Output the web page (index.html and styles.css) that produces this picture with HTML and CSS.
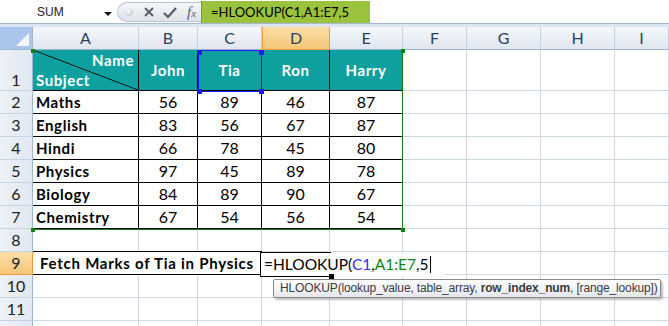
FILE: index.html
```html
<!DOCTYPE html>
<html lang="en">
<head>
	<meta charset="UTF-8">
	<title>HLOOKUP</title>
	<link rel="stylesheet" href="styles.css">
</head>
<body>
	<div class="formula-bar">
		<div class="name-box"><span>SUM</span><i class="drop"></i></div>
		<div class="fx-buttons">
			<span class="dot"></span>
			<svg width="10" height="10" viewBox="0 0 10 10"><path d="M1 1L9 9M9 1L1 9" stroke="#5a5e66" stroke-width="2"/></svg>
			<svg width="14" height="11" viewBox="0 0 14 11"><path d="M1 6L5 10L13 1" stroke="#5a5e66" stroke-width="2.2" fill="none"/></svg>
			<span class="fx">f<sub>x</sub></span>
		</div>
		<div class="formula-input"><span class="hl">=HLOOKUP(C1,A1:E7,5</span></div>
	</div>
	<div class="strip"></div>

	<div class="sheet">
		<!-- column headers -->
		<div class="corner"></div>
		<div class="ch">A</div><div class="ch">B</div><div class="ch">C</div><div class="ch sel">D</div>
		<div class="ch">E</div><div class="ch">F</div><div class="ch">G</div><div class="ch">H</div><div class="ch">I</div>

		<!-- row 1 -->
		<div class="rh tall">1</div>
		<div class="c hd diag"><span class="nm">Name</span><span class="sb">Subject</span></div>
		<div class="c hd">John</div><div class="c hd">Tia</div><div class="c hd">Ron</div><div class="c hd">Harry</div>
		<div class="c"></div><div class="c"></div><div class="c"></div><div class="c"></div>

		<div class="rh">2</div>
		<div class="c t nm-cell">Maths</div><div class="c t">56</div><div class="c t">89</div><div class="c t">46</div><div class="c t">87</div>
		<div class="c"></div><div class="c"></div><div class="c"></div><div class="c"></div>

		<div class="rh">3</div>
		<div class="c t nm-cell">English</div><div class="c t">83</div><div class="c t">56</div><div class="c t">67</div><div class="c t">87</div>
		<div class="c"></div><div class="c"></div><div class="c"></div><div class="c"></div>

		<div class="rh">4</div>
		<div class="c t nm-cell">Hindi</div><div class="c t">66</div><div class="c t">78</div><div class="c t">45</div><div class="c t">80</div>
		<div class="c"></div><div class="c"></div><div class="c"></div><div class="c"></div>

		<div class="rh">5</div>
		<div class="c t nm-cell">Physics</div><div class="c t">97</div><div class="c t">45</div><div class="c t">89</div><div class="c t">78</div>
		<div class="c"></div><div class="c"></div><div class="c"></div><div class="c"></div>

		<div class="rh">6</div>
		<div class="c t nm-cell">Biology</div><div class="c t">84</div><div class="c t">89</div><div class="c t">90</div><div class="c t">67</div>
		<div class="c"></div><div class="c"></div><div class="c"></div><div class="c"></div>

		<div class="rh">7</div>
		<div class="c t nm-cell">Chemistry</div><div class="c t">67</div><div class="c t">54</div><div class="c t">56</div><div class="c t">54</div>
		<div class="c"></div><div class="c"></div><div class="c"></div><div class="c"></div>

		<div class="rh">8</div>
		<div class="c"></div><div class="c"></div><div class="c"></div><div class="c"></div><div class="c"></div>
		<div class="c"></div><div class="c"></div><div class="c"></div><div class="c"></div>

		<div class="rh sel">9</div>
		<div class="c merged">Fetch Marks of Tia in Physics</div>
		<div class="c"></div><div class="c"></div><div class="c"></div><div class="c"></div><div class="c"></div><div class="c"></div>

		<div class="rh">10</div>
		<div class="c"></div><div class="c"></div><div class="c"></div><div class="c"></div><div class="c"></div>
		<div class="c"></div><div class="c"></div><div class="c"></div><div class="c"></div>

		<div class="rh">11</div>
		<div class="c"></div><div class="c"></div><div class="c"></div><div class="c"></div><div class="c"></div>
		<div class="c"></div><div class="c"></div><div class="c"></div><div class="c"></div>

		<!-- row 12 is only a sliver at the bottom of the window -->
		<div class="rh"></div>
		<div class="c"></div><div class="c"></div><div class="c"></div><div class="c"></div><div class="c"></div>
		<div class="c"></div><div class="c"></div><div class="c"></div><div class="c"></div>

		<!-- range references shown while editing -->
		<div class="ref ref-green">
			<i class="h tl"></i><i class="h tr"></i><i class="h bl"></i><i class="h br"></i>
		</div>
		<div class="ref ref-blue">
			<i class="h tl"></i><i class="h tr"></i><i class="h bl"></i><i class="h br"></i>
		</div>

		<div class="edit"><span class="edit-text">=HLOOKUP(<b class="r-blue">C1</b>,<b class="r-green">A1:E7</b>,5<i class="caret"></i></span><i class="fill"></i></div>

		<div class="tip">HLOOKUP(lookup_value, table_array, <b>row_index_num</b>, [range_lookup])</div>
	</div>
</body>
</html>
```

FILE: styles.css
```css
*{box-sizing: border-box;}
html,body{height: 326px;overflow: hidden;}
body{margin: 0;background: #fff;font-family: Lato, "Liberation Sans", sans-serif;color: #000;}

/* formula bar */
.formula-bar{display: flex;height: 24px;border-bottom: 1px solid #a7b9d1;background: #fff;}
.name-box{width: 117px;position: relative;font: 12px "Liberation Sans", sans-serif;color: #222;padding: 5px 0 0 37px;}
.name-box .drop{position: absolute;left: 104px;top: 12px;border: 4px solid transparent;border-top: 4px solid #111;border-bottom: 0;}
.fx-buttons{width: 84px;margin: 2px 0 1px;display: flex;align-items: center;gap: 9px;padding-left: 7px;border-radius: 11px 0 0 11px;border: 1px solid #b9c5d5;border-right: 0;background: linear-gradient(#f4f6f9, #dfe4ea);}
.fx-buttons .dot{width: 8px;height: 8px;border-radius: 50%;background: radial-gradient(circle at 40% 35%, #fff, #b5bac2);margin-right: 2px;}
.fx-buttons .fx{font: italic 15px "Liberation Serif", serif;color: #5a5e66;margin-left: 1px;}
.fx-buttons .fx sub{font-size: 11px;vertical-align: 0;}
.formula-input{flex: 1;padding-top: 1px;}
.formula-input .hl{display: inline-block;width: 169px;height: 22px;background: #9bc23c;border-left: 1px solid #7b9a30;font: 13px Lato, sans-serif;line-height: 22px;padding-left: 9px;}

.strip{height: 3px;background: #dce6f2;}

/* sheet grid */
.sheet{position: relative;display: grid;grid-template-columns: 33px 106px 59px 64px 68px 73px 64px 74px 74px 1fr;grid-template-rows: 23px 41px repeat(11, 23px);font-size: 15px;}
.corner{background: #aac6ec;border-right: 1px solid #9eb6ce;border-bottom: 1px solid #9eb6ce;position: relative;}
.corner::after{content: "";position: absolute;right: 3px;bottom: 3px;border-style: solid;border-width: 0 0 13px 13px;border-color: transparent transparent #f4f7fb transparent;}
.ch{background: linear-gradient(#f5f7fb, #dfe6f0);border-right: 1px solid #c5d1e0;border-bottom: 1px solid #9eb6ce;color: #27415f;text-align: center;line-height: 22px;font-size: 16px;}
.ch.sel{background: linear-gradient(#fbdfa8, #f5c677);border-right-color: #f29b3b;border-left: 1px solid #f29b3b;border-bottom-color: #f29b3b;}
.rh{background: linear-gradient(to right, #edf1f7, #e1e8f2);border-right: 1px solid #9eb6ce;border-bottom: 1px solid #c5d3e3;color: #222;text-align: center;line-height: 22px;font-size: 16px;}
.rh.tall{line-height: 60px;}
.rh.sel{background: linear-gradient(#fbdfa8, #f5c677);border-right-color: #f29b3b;border-bottom-color: #f29b3b;}

.c{border-right: 1px solid #d0d8e4;border-bottom: 1px solid #d0d8e4;white-space: nowrap;line-height: 22px;}
.c.t{border-right-color: #000;border-bottom-color: #000;text-align: center;font-size: 16px;}
.c.nm-cell{text-align: left;font-weight: bold;font-size: 15px;letter-spacing: .6px;padding-left: 3px;}
.c.hd{background: #0ea09e;color: #fff;font-weight: bold;letter-spacing: .6px;text-align: center;line-height: 40px;border-right-color: #000;border-bottom-color: #000;}
.c.diag{position: relative;background: linear-gradient(to top right, #0ea09e calc(50% - 0.8px), #000 50%, #0ea09e calc(50% + 0.8px));line-height: 18px;}
.diag .nm{position: absolute;right: 4px;top: 1px;}
.diag .sb{position: absolute;left: 3px;bottom: 1px;}
.c.merged{grid-column: span 3;font-weight: bold;letter-spacing: .75px;text-align: center;border-right-color: #000;border-bottom-color: #000;border-top: 1px solid #000;margin-top: -1px;line-height: 23px;}

/* references */
.ref{position: absolute;pointer-events: none;}
.ref-green{left: 33px;top: 23px;width: 370px;height: 180px;border-right: 1px solid #128012;border-bottom: 1px solid #128012;}
.ref-blue{left: 198px;top: 23px;width: 64px;height: 42px;border: 1px solid #1a1aff;}
.ref .h{position: absolute;width: 5px;height: 5px;}
.ref-green .h{background: #128012;width: 4px;height: 4px;}
.ref-blue .h{background: #1a1aff;}
.ref .tl{left: -2px;top: -1px;}
.ref .tr{right: -3px;top: -1px;}
.ref .bl{left: -2px;bottom: -3px;}
.ref .br{right: -3px;bottom: -3px;}

/* cell in edit mode */
.edit{position: absolute;left: 260px;top: 225px;width: 71px;height: 25px;border: 1px solid #000;border-right: 0;}
.edit-text{display: inline-block;height: 23px;line-height: 23px;background: #fff;padding: 0 14px 0 3px;white-space: nowrap;font-size: 15.5px;}
.edit-text b{font-weight: normal;}
.r-blue{color: #2f2fff;}
.r-green{color: #0b870b;}
.caret{display: inline-block;width: 1px;height: 17px;background: #000;vertical-align: -3px;margin-left: 1px;}
.edit .fill{position: absolute;right: -3px;bottom: -3px;width: 5px;height: 5px;background: #000;}

.tip{position: absolute;left: 273px;top: 252px;width: 388px;height: 19px;border: 1px solid #8a8a8a;border-radius: 2px;background: linear-gradient(#fff, #e6e7ee);box-shadow: 2px 2px 2px rgba(0,0,0,.25);font: 12px "Liberation Sans", sans-serif;letter-spacing: -.15px;line-height: 17px;color: #3c3c3c;padding-left: 6px;white-space: nowrap;}
```
